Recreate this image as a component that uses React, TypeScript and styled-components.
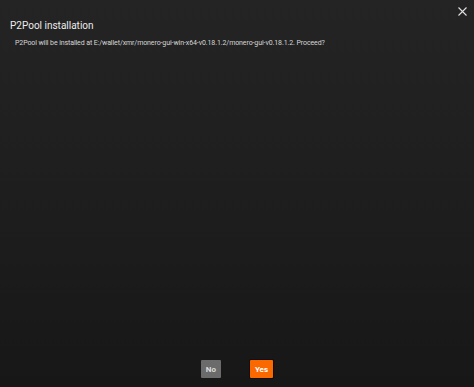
import React from 'react'
import styled, { createGlobalStyle } from 'styled-components'

const GlobalStyle = createGlobalStyle`
  html, body {
    margin: 0;
    padding: 0;
    background: #1c1c1c;
  }
  #root {
    height: 387px;
  }
`

const Dialog = styled.div`
  box-sizing: border-box;
  width: 474px;
  height: 387px;
  display: flex;
  flex-direction: column;
  background: linear-gradient(180deg, #242424 0%, #1e1e1e 50%, #171717 100%);
  font-family: Roboto, "Liberation Sans", sans-serif;
  color: #e6e6e6;
  overflow: hidden;
`

const Header = styled.div`
  display: flex;
  align-items: flex-start;
  justify-content: space-between;
  padding: 7px 7px 0 10px;
`

const Title = styled.h1`
  margin: 13px 0 0;
  font-size: 10px;
  font-weight: 400;
  line-height: 12px;
  color: #ececec;
`

const CloseButton = styled.button`
  width: 9px;
  height: 9px;
  padding: 0;
  margin: 0;
  border: none;
  background: none;
  color: #e0e0e0;
  display: flex;
  cursor: pointer;
`

const Message = styled.p`
  margin: 7px 0 0 15px;
  font-size: 7px;
  line-height: 9px;
  letter-spacing: -0.1px;
  color: #d6d6d6;
`

const Spacer = styled.div`
  flex: 1;
`

const Footer = styled.div`
  display: flex;
  justify-content: center;
  gap: 29px;
  padding-bottom: 9px;
`

const Button = styled.button<{ $primary?: boolean }>`
  height: 18px;
  padding: 0 ${p => (p.$primary ? 5 : 4)}px;
  min-width: 20px;
  border: none;
  border-radius: 1px;
  font-family: Roboto, "Liberation Sans", sans-serif;
  font-size: 8px;
  font-weight: 700;
  background: ${p => (p.$primary ? '#fa6800' : '#6b6b6b')};
  color: ${p => (p.$primary ? '#ffffff' : '#dcdcdc')};
  box-shadow: ${p => (p.$primary ? '0 0 0 1px #0f0f0f' : 'none')};
  cursor: pointer;
`

const CloseIcon = () => (
  <svg width="9" height="9" viewBox="0 0 9 9">
    <path d="M0.5 0.5 L8.5 8.5 M8.5 0.5 L0.5 8.5" stroke="currentColor" strokeWidth="1.1" fill="none" />
  </svg>
)

const App = () => {
  return (
    <>
      <GlobalStyle />
      <Dialog>
        <Header>
          <Title>P2Pool installation</Title>
          <CloseButton aria-label="Close">
            <CloseIcon />
          </CloseButton>
        </Header>
        <Message>
          P2Pool will be installed at E:/wallet/xmr/monero-gui-win-x64-v0.18.1.2/monero-gui-v0.18.1.2. Proceed?
        </Message>
        <Spacer />
        <Footer>
          <Button>No</Button>
          <Button $primary>Yes</Button>
        </Footer>
      </Dialog>
    </>
  )
}

export default App
